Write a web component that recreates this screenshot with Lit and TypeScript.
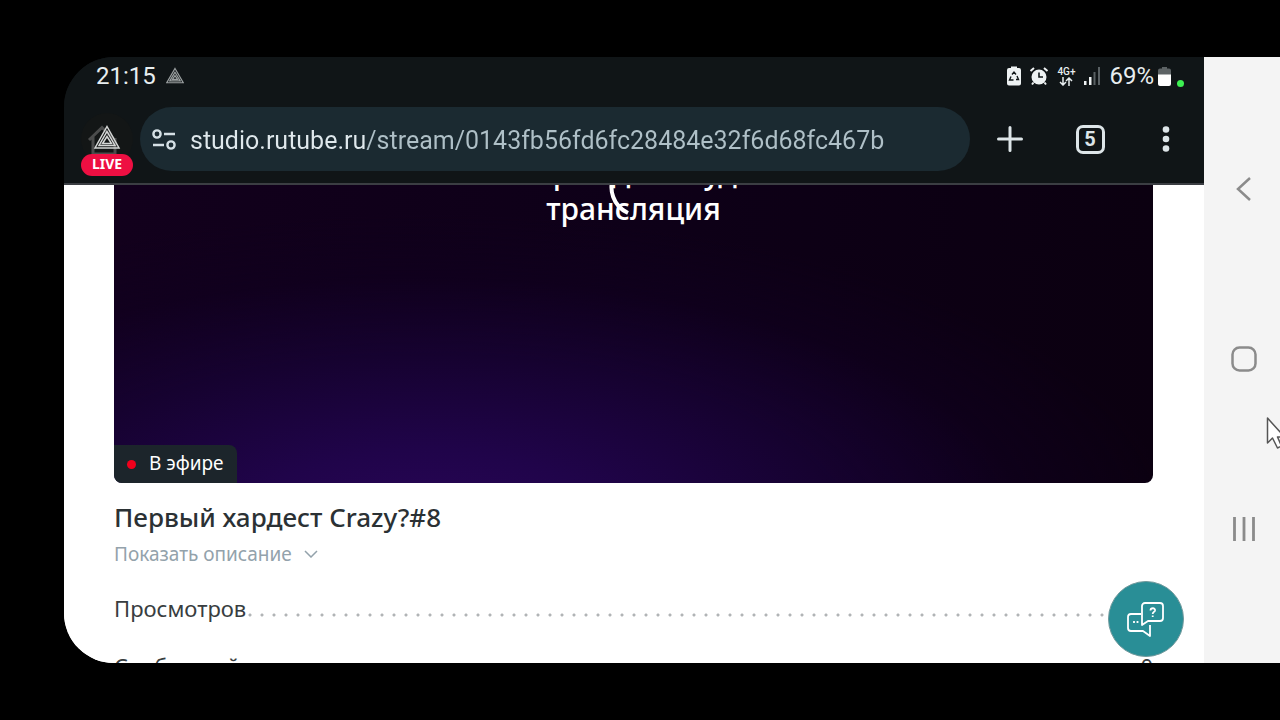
import { LitElement, html, css, svg } from "lit";
import { customElement } from "lit/decorators.js";

const triangle = svg`
  <path d="M12 2 23 21H1Z" />
  <path d="M12 7 19 18.5H5Z" />
  <path d="M12 11.500 15.500 16.500H8.500Z" />
`;

@customElement("status-bar")
class StatusBar extends LitElement {
  static styles = css`
    :host { display: flex; align-items: center; justify-content: space-between; height: 38px; padding: 0 20px 0 32px; color: #e8eef0; font: 24px/38px Roboto, sans-serif; }
    .group { display: flex; align-items: center; }
    .start { gap: 10px; }
    .end { gap: 8px; }
    .charge { display: flex; align-items: center; gap: 4px; }
    .net { display: flex; flex-direction: column; align-items: center; font: 500 10px/10px Roboto, sans-serif; }
    .dot { width: 7px; height: 7px; border-radius: 50%; background: #3df052; align-self: flex-end; margin: 0 0 8px -2px; }
    svg { display: block; }
  `;
  render() {
    return html`
      <div class="group start">
        <span>21:15</span>
        <svg width="18" height="18" viewBox="0 0 24 24" fill="none" stroke="#9a9fa0" stroke-width="1.600">${triangle}</svg>
      </div>
      <div class="group end">
        <svg width="14" height="20" viewBox="0 0 14 20">
          <path d="M4 2V0.500h6V2h2a2 2 0 0 1 2 2v13.500a2 2 0 0 1-2 2H2a2 2 0 0 1-2-2V4a2 2 0 0 1 2-2z" fill="#eef2f3" />
          <path d="M5 8.500 7 6l2 2.500M10 10l1.500 3.500H9M6.500 14H2.500L4 10.500" fill="none" stroke="#111719" stroke-width="1.400" />
        </svg>
        <svg width="20" height="20" viewBox="0 0 20 20">
          <circle cx="10" cy="11" r="7.500" fill="#eef2f3" />
          <path d="M1.500 5 5 2M18.500 5 15 2M4.500 16.500 3 18.500M15.500 16.500 17 18.500" stroke="#eef2f3" stroke-width="2" />
          <path d="M10 6.500V11h4" fill="none" stroke="#111719" stroke-width="1.600" />
        </svg>
        <span class="net">
          <span>4G+</span>
          <svg width="14" height="9" viewBox="0 0 14 9" fill="none" stroke="#e8eef0" stroke-width="1.500"><path d="M4 0v8M1 5l3 3 3-3M10 9V1M7 4l3-3 3 3" /></svg>
        </span>
        <svg width="18" height="18" viewBox="0 0 18 18">
          <path d="M1 14h2.500v4H1zM6 10h2.500v8H6z" fill="#eef2f3" />
          <path d="M10.500 5h2v13h-2zM15 0h2v18h-2z" fill="#596063" />
        </svg>
        <span class="charge">
          <span>69%</span>
          <svg width="13" height="19" viewBox="0 0 13 19">
            <path d="M4 1.500V0h5v1.500h2a2 2 0 0 1 2 2V8H0V3.500a2 2 0 0 1 2-2z" fill="#5d6365" />
            <path d="M0 7.500h13V17a2 2 0 0 1-2 2H2a2 2 0 0 1-2-2z" fill="#fff" />
          </svg>
        </span>
        <span class="dot"></span>
      </div>
    `;
  }
}

@customElement("browser-bar")
class BrowserBar extends LitElement {
  static styles = css`
    :host { display: flex; align-items: center; height: 64px; padding: 0 2px 0 12px; margin: 12px 0; color: #dde5e8; }
    button { border: 0; padding: 0; margin: 0; background: none; color: inherit; font: inherit; display: grid; place-items: center; }
    .home { position: relative; width: 64px; height: 64px; }
    .live { position: absolute; left: 5px; bottom: -5px; width: 52px; height: 22px; border-radius: 11px; background: #ee0f42; color: #fff; font: 700 14px/20px "Noto Sans", sans-serif; text-align: center; }
    .address { flex: 1; min-width: 0; height: 64px; display: flex; align-items: center; gap: 13px; padding: 0 11px; border-radius: 32px; background: #1b2a31; }
    .address input { flex: 1; min-width: 0; height: 40px; border: 0; padding: 2px 0 0; box-sizing: border-box; outline: none; font: 25px/38px Roboto, sans-serif; color: transparent; background: linear-gradient(90deg, #dfe8ec 175px, #afc0c7 175px); background-clip: text; -webkit-background-clip: text; }
    .actions { display: flex; }
    .tool { width: 80px; height: 64px; }
    .more { width: 72px; }
    .tabs { width: 23px; height: 23px; border: 3px solid #dde5e8; border-radius: 7px; font: 700 20px/23px Roboto, sans-serif; text-align: center; }
    svg { display: block; }
  `;
  render() {
    return html`
      <button class="home" aria-label="Home">
        <svg width="56" height="56" viewBox="0 0 56 56" fill="none">
          <circle cx="27" cy="28" r="26" fill="#131616" />
          <path d="M9 29 22 16.500 35 29M13 26v17h22V27" stroke="#4b4c4c" stroke-width="3" />
          <g transform="translate(14 13.500)" stroke="#d4d6d5" stroke-width="1.500">
            <path d="M13 2 25 23.500H1Z" /><path d="M13 7 21 21H5Z" /><path d="M13 12 17.500 19H8.500Z" />
          </g>
        </svg>
        <span class="live">LIVE</span>
      </button>
      <label class="address">
        <svg width="26" height="22" viewBox="0 0 26 22" fill="none" stroke="#d5e0e5" stroke-width="2.400">
          <circle cx="6" cy="6" r="3.600" /><path d="M13 6h11M2 17h11" /><circle cx="20" cy="17" r="3.600" />
        </svg>
        <input aria-label="Address" value="studio.rutube.ru/stream/0143fb56fd6fc28484e32f6d68fc467b" />
      </label>
      <div class="actions">
        <button class="tool" aria-label="New tab"><svg width="26" height="26" viewBox="0 0 26 26" stroke="currentColor" stroke-width="3" stroke-linecap="round"><path d="M13 1.500v23M1.500 13h23" /></svg></button>
        <button class="tool" aria-label="Tabs"><span class="tabs">5</span></button>
        <button class="tool more" aria-label="Menu"><svg width="8" height="26" viewBox="0 0 8 26" fill="currentColor"><circle cx="4" cy="3.500" r="3.300" /><circle cx="4" cy="13" r="3.300" /><circle cx="4" cy="22.500" r="3.300" /></svg></button>
      </div>
    `;
  }
}

@customElement("stream-page")
class StreamPage extends LitElement {
  static styles = css`
    :host { display: block; flex: 1; min-height: 0; overflow: hidden; padding: 0 51px 0 50px; background: #fff; font-family: "Noto Sans", sans-serif; color: #2b3134; }
    .player { position: relative; aspect-ratio: 16 / 9; margin-top: -286px; border-radius: 8px; overflow: hidden; display: grid; place-items: center; color: #fff;
      background: radial-gradient(ellipse 72% 54% at 30% 108%, #290558 0%, #20044a 25%, #160230 55%, #10002080 80%, #0d001300 100%), linear-gradient(90deg, #12001c, #0e0018 50%, #0b0010); }
    .message { margin: 0; text-align: center; font: 500 30px/36px "Noto Sans", sans-serif; }
    .spinner { position: absolute; inset: 0; margin: auto; }
    .badge { position: absolute; left: 0; bottom: 0; display: flex; align-items: center; gap: 13px; height: 38px; padding: 0 13px; border-radius: 0 8px 0 0; background: #1c252b; font-size: 19px; line-height: 36px; }
    .badge i { width: 9px; height: 9px; border-radius: 50%; background: #f0001c; }
    .badge span { height: 38px; }
    h1 { margin: 17px 0 0; font-size: 26px; line-height: 34px; font-weight: 500; }
    .toggle { display: flex; align-items: center; gap: 12px; border: 0; padding: 0; margin: 6px 0 0; background: none; color: #93a2ab; font: 19px/28px "Noto Sans", sans-serif; }
    dl { margin: 24px 0 0; display: flex; flex-direction: column; gap: 26px; font-size: 22px; line-height: 32px; color: #383d40; }
    .row { display: flex; align-items: center; }
    .leader { flex: 1; height: 12px; margin-top: 14px; background: radial-gradient(circle at 4px 6px, #b1b4b6 1px, transparent 2px) 0 0 / 12px 12px; }
    dt, dd { margin: 0; }
  `;
  render() {
    return html`
      <div class="player">
        <p class="message">Скоро здесь будет<br />трансляция</p>
        <svg class="spinner" width="54" height="54" viewBox="0 0 54 54" fill="none" stroke="#fff" stroke-width="4"><path d="M7 12C1 25 6 42 21 49" /></svg>
        <span class="badge"><i></i><span>В эфире</span></span>
      </div>
      <h1>Первый хардест Crazy?#8</h1>
      <button class="toggle">Показать описание
        <svg width="14" height="8" viewBox="0 0 14 8" fill="none" stroke="currentColor" stroke-width="1.500"><path d="M1 1l6 6 6-6" /></svg>
      </button>
      <dl>
        <div class="row"><dt>Просмотров</dt><span class="leader"></span><dd>0</dd></div>
        <div class="row"><dt>Сообщений</dt><span class="leader"></span><dd>0</dd></div>
      </dl>
    `;
  }
}

@customElement("app-root")
class AppRoot extends LitElement {
  static styles = css`
    :host { display: block; }
    .stage { display: flex; box-sizing: border-box; height: 100vh; padding: 57px 0 57px 64px; background: #000; overflow: hidden; position: relative; }
    .screen { flex: 1; min-width: 0; display: flex; flex-direction: column; position: relative; overflow: hidden; border-radius: 50px 0 0 50px; background: linear-gradient(#101517 50%, #fff 50%); }
    header { background: #101517; border-bottom: 2px solid #3b3e43; position: relative; z-index: 1; }
    .chat { position: absolute; right: 20px; bottom: 6px; width: 76px; height: 76px; border: 1px solid #71999c; border-radius: 50%; background: #298e96; display: grid; place-items: center; padding: 0; }
    .nav { width: 76px; background: #f4f4f4; display: flex; flex-direction: column; align-items: center; justify-content: center; gap: 140px; padding: 0 0 2px 3px; box-sizing: border-box; }
    .nav button { border: 0; padding: 0; background: none; width: 72px; height: 30px; display: grid; place-items: center; }
    .cursor { position: absolute; right: -9px; top: 416px; }
    svg { display: block; }
  `;
  render() {
    return html`
      <div class="stage">
        <div class="screen">
          <header><status-bar></status-bar><browser-bar></browser-bar></header>
          <stream-page></stream-page>
          <button class="chat" aria-label="Chat">
            <svg width="38" height="36" viewBox="0 0 38 36" fill="none" stroke="#fff" stroke-width="1.800" stroke-linejoin="round">
              <path d="M14 13H4a3 3 0 0 0-3 3v11a3 3 0 0 0 3 3h12l7 5V24" />
              <path d="M18 2h15a3 3 0 0 1 3 3v12a3 3 0 0 1-3 3H21l-6 4V5a3 3 0 0 1 3-3z" />
              <path d="M23.500 9.500c0-3 5-3 4.500 0-.300 1.500-2.300 1.500-2.300 3.500M25.700 14.500v1.500" />
              <path d="M7 20v2M10.500 20v2" />
            </svg>
          </button>
        </div>
        <nav class="nav">
          <button aria-label="Back"><svg width="16" height="24" viewBox="0 0 16 24" fill="none" stroke="#8b8b8b" stroke-width="2.500"><path d="M14 1 2 12l12 11" /></svg></button>
          <button aria-label="Home"><svg width="26" height="26" viewBox="0 0 26 26" fill="none" stroke="#8b8b8b" stroke-width="2.500"><rect x="1.500" y="1.500" width="23" height="23" rx="7" /></svg></button>
          <button aria-label="Recents"><svg width="24" height="24" viewBox="0 0 24 24" stroke="#8b8b8b" stroke-width="2.800"><path d="M2.500 0v24M12 0v24M21.500 0v24" /></svg></button>
        </nav>
        <svg class="cursor" width="23" height="34" viewBox="0 0 23 34"><path d="M1.500 2v25l5-5 5 10 4-2-4-9h7z" fill="#fff" stroke="#555" stroke-width="1.500" stroke-linejoin="round" /></svg>
      </div>
    `;
  }
}
